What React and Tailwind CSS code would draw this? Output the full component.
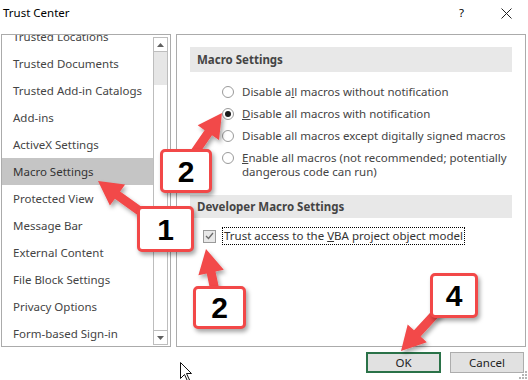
import React from 'react';

const listItems = [
  'Trusted Locations',
  'Trusted Documents',
  'Trusted Add-in Catalogs',
  'Add-ins',
  'ActiveX Settings',
  'Macro Settings',
  'Protected View',
  'Message Bar',
  'External Content',
  'File Block Settings',
  'Privacy Options',
  'Form-based Sign-in',
];

// polygon for a fat callout arrow, tail -> tip
const arrowPoints = (x1, y1, x2, y2, sw = 9, hw = 26, hl = 24) => {
  const dx = x2 - x1;
  const dy = y2 - y1;
  const len = Math.hypot(dx, dy);
  const ux = dx / len;
  const uy = dy / len;
  const px = -uy;
  const py = ux;
  const bx = x2 - ux * hl;
  const by = y2 - uy * hl;
  const pts = [
    [x1 + (px * sw) / 2, y1 + (py * sw) / 2],
    [bx + (px * sw) / 2, by + (py * sw) / 2],
    [bx + (px * hw) / 2, by + (py * hw) / 2],
    [x2, y2],
    [bx - (px * hw) / 2, by - (py * hw) / 2],
    [bx - (px * sw) / 2, by - (py * sw) / 2],
    [x1 - (px * sw) / 2, y1 - (py * sw) / 2],
  ];
  return pts.map((p) => p.map((v) => v.toFixed(1)).join(',')).join(' ');
};

const Radio = ({ checked }) => (
  <span className="mt-[1px] flex h-[12px] w-[12px] shrink-0 items-center justify-center rounded-full border border-[#9a9a9a] bg-white">
    {checked && <span className="h-[6px] w-[6px] rounded-full bg-[#1a1a1a]" />}
  </span>
);

const Badge = ({ n, className }) => (
  <div
    className={`absolute flex items-center justify-center rounded-[5px] border-[3px] border-[#f24848] bg-white text-[30px] font-bold text-black shadow-[2px_3px_4px_rgba(0,0,0,0.35)] ${className}`}
    style={{ fontFamily: '"Liberation Sans", Arial, sans-serif' }}
  >
    {n}
  </div>
);

export default function App() {
  return (
    <div
      className="relative h-[380px] w-[528px] overflow-hidden whitespace-nowrap bg-white text-[11.5px] text-[#444]"
      style={{ fontFamily: '"Noto Sans", "Open Sans", sans-serif' }}
    >
      {/* title bar */}
      <div className="flex h-[34px] items-start pt-[5px] leading-[16px]">
        <span className="pl-[3px] text-black">Trust Center</span>
        <span className="ml-auto mr-[37px] text-black">?</span>
        <svg width="11" height="11" viewBox="0 0 11 11" className="mr-[16px] mt-[3px]">
          <path d="M0.5 0.5 L10.5 10.5 M10.5 0.5 L0.5 10.5" stroke="#222" strokeWidth="1" />
        </svg>
      </div>

      <div className="flex h-[313px]">
        {/* category list */}
        <div className="ml-[1px] flex w-[170px] border border-[#ababab]">
          <div className="flex-1 overflow-hidden">
            <div className="-mt-[12px]">
              {listItems.map((item) => (
                <div
                  key={item}
                  className={`flex h-[27px] items-center pl-[11px] ${item === 'Macro Settings' ? 'bg-[#c5c5c5] text-[#333]' : ''}`}
                >
                  {item}
                </div>
              ))}
            </div>
          </div>
          <div className="mb-[1px] mr-[2px] mt-[2px] flex w-[15px] flex-col border border-[#bdbdbd]">
            <div className="flex h-[14px] items-center justify-center border-b border-[#bdbdbd]">
              <svg width="7" height="4" viewBox="0 0 7 4">
                <path d="M0 4 L3.5 0 L7 4 Z" fill="#606060" />
              </svg>
            </div>
            <div className="h-[33px] bg-[#e6e6e6]" />
            <div className="flex-1" />
            <div className="flex h-[14px] items-center justify-center border-t border-[#bdbdbd]">
              <svg width="7" height="4" viewBox="0 0 7 4">
                <path d="M0 0 L3.5 4 L7 0 Z" fill="#606060" />
              </svg>
            </div>
          </div>
        </div>

        {/* settings panel */}
        <div className="ml-[5px] w-[350px] border border-[#ababab] px-[13px] pt-[12px]">
          <div className="flex h-[25px] items-center bg-[#e8e8e8] pl-[7px] font-bold text-[#444]">
            Macro Settings
          </div>
          <div className="pl-[32px] pt-[9px] leading-[14px]">
            <div className="flex gap-[8px] py-[4px]">
              <Radio />
              <span>
                Disable a<u>l</u>l macros without notification
              </span>
            </div>
            <div className="flex gap-[8px] py-[4px]">
              <Radio checked />
              <span>
                <u>D</u>isable all macros with notification
              </span>
            </div>
            <div className="flex gap-[8px] py-[4px]">
              <Radio />
              <span>Disable all macros except digitally signed macros</span>
            </div>
            <div className="flex gap-[8px] py-[4px]">
              <Radio />
              <span>
                <u>E</u>nable all macros (not recommended; potentially
                <br />
                dangerous code can run)
              </span>
            </div>
          </div>
          <div className="mt-[12px] flex h-[23px] items-center bg-[#e8e8e8] pl-[7px] font-bold text-[#444]">
            Developer Macro Settings
          </div>
          <div className="mt-[9px] flex items-center pl-[13px]">
            <span className="flex h-[13px] w-[13px] items-center justify-center border border-[#9a9a9a] bg-[#e8e8e8]">
              <svg width="9" height="8" viewBox="0 0 9 8">
                <path d="M1 4 L3.5 6.5 L8 1" stroke="#6a6a6a" strokeWidth="1.3" fill="none" />
              </svg>
            </span>
            <span className="ml-[6px] border border-dotted border-black px-[1px] leading-[16px] text-[#333]">
              Trust access to the <u>V</u>BA project object model
            </span>
          </div>
        </div>
      </div>

      {/* buttons */}
      <div className="mt-[5px] flex pr-[4px]">
        <div className="ml-auto flex h-[21px] w-[75px] items-center justify-center border-2 border-[#2a7248] bg-[#e1e1e1] text-[#222]">
          OK
        </div>
        <div className="ml-[9px] flex h-[21px] w-[74px] items-center justify-center border border-[#adadad] bg-[#e1e1e1] text-[#222]">
          Cancel
        </div>
      </div>

      {/* mouse pointer and resize grip */}
      <svg className="absolute left-[180px] top-[362px]" width="13" height="20" viewBox="0 0 13 20">
        <path d="M0.5 0.5 L0.5 16.5 L4.5 12.5 L7.5 19 L9.5 18 L6.5 11.5 L11.5 11.5 Z" fill="white" stroke="#111" strokeWidth="1" />
      </svg>
      <svg className="absolute left-[518px] top-[370px]" width="10" height="10" viewBox="0 0 10 10">
        <g fill="#b5b5b5">
          <rect x="7" y="1" width="2" height="2" />
          <rect x="4" y="4" width="2" height="2" />
          <rect x="7" y="4" width="2" height="2" />
          <rect x="1" y="7" width="2" height="2" />
          <rect x="4" y="7" width="2" height="2" />
          <rect x="7" y="7" width="2" height="2" />
        </g>
      </svg>

      {/* callout arrows */}
      <svg className="pointer-events-none absolute left-0 top-0" width="528" height="380">
        <defs>
          <filter id="sh" x="-20%" y="-20%" width="140%" height="140%">
            <feDropShadow dx="2" dy="3" stdDeviation="2" floodColor="#000" floodOpacity="0.35" />
          </filter>
        </defs>
        <g fill="#f24848" filter="url(#sh)">
          <polygon points={arrowPoints(155, 222, 98, 181)} />
          <polygon points={arrowPoints(186, 165, 222, 113)} />
          <polygon points={arrowPoints(217, 300, 206, 249)} />
          <polygon points={arrowPoints(448, 300, 401, 351)} />
        </g>
      </svg>

      <Badge n="1" className="left-[137px] top-[206px] h-[46px] w-[57px]" />
      <Badge n="2" className="left-[160px] top-[149px] h-[44px] w-[52px]" />
      <Badge n="2" className="left-[193px] top-[286px] h-[43px] w-[53px]" />
      <Badge n="4" className="left-[430px] top-[273px] h-[45px] w-[48px]" />
    </div>
  );
}
